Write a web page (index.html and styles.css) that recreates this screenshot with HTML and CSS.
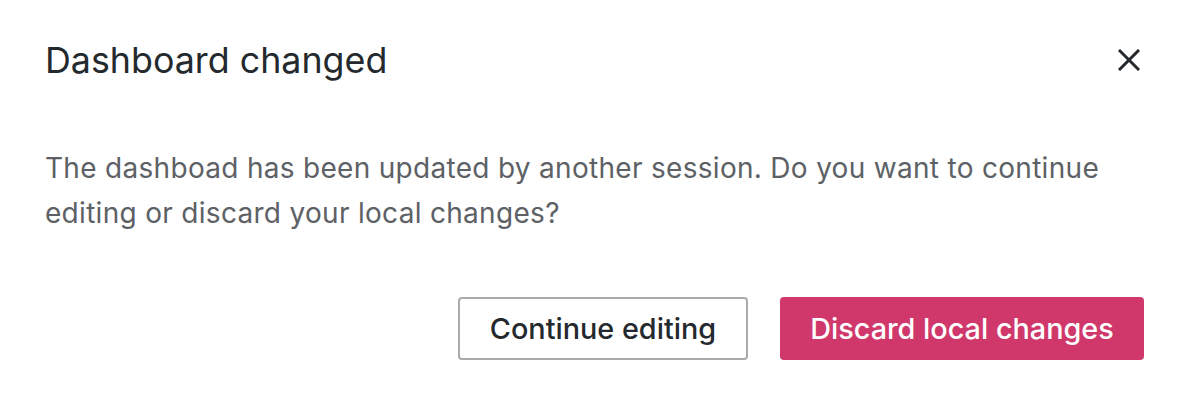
FILE: index.html
```html
<!DOCTYPE html>
<html>
<head>
<meta charset="utf-8">
<link rel="stylesheet" href="styles.css">
</head>
<body>
<div class="modal">
  <div class="header">
    <h2 class="title">Dashboard changed</h2>
    <button class="close" aria-label="Close">
      <svg width="22" height="22" viewBox="0 0 22 22"><path d="M2 2L20 20M20 2L2 20" stroke="#24292e" stroke-width="3" stroke-linecap="square" fill="none"/></svg>
    </button>
  </div>
  <p class="body">The dashboad has been updated by another session. Do you want to continue editing or discard your local changes?</p>
  <div class="actions">
    <button class="btn btn-secondary">Continue editing</button>
    <button class="btn btn-primary">Discard local changes</button>
  </div>
</div>
</body>
</html>
```
FILE: styles.css
```css
html, body {
  margin: 0;
  padding: 0;
  background: #ffffff;
}
body {
  font-family: "Inter", "Liberation Sans", sans-serif;
}
.modal {
  width: 1188px;
  height: 406px;
  box-sizing: border-box;
  padding: 38px 44px 0 45px;
  display: flex;
  flex-direction: column;
}
.header {
  display: flex;
  justify-content: space-between;
  align-items: center;
  height: 44px;
}
.title {
  margin: 0;
  font-size: 35.8px;
  font-weight: 400;
  color: #24292e;
  line-height: 44px;
}
.close {
  border: none;
  background: none;
  padding: 0;
  margin-right: 4px;
  width: 22px;
  height: 22px;
  display: flex;
}
.body {
  margin: 64px 0 0 0;
  font-size: 28px;
  letter-spacing: 0.3px;
  line-height: 45px;
  color: #5d6166;
  max-width: 1080px;
}
.actions {
  display: flex;
  justify-content: flex-end;
  gap: 32px;
  margin-top: 61px;
}
.btn {
  font-family: "Inter", "Liberation Sans", sans-serif;
  font-size: 28.8px;
  font-weight: 500;
  height: 63px;
  border-radius: 4px;
  box-sizing: border-box;
  padding: 0;
  cursor: pointer;
}
.btn-secondary {
  background: #ffffff;
  border: 2px solid #aaaaaa;
  color: #24292e;
  width: 290px;
}
.btn-primary {
  background: #d0386c;
  border: none;
  color: #ffffff;
  width: 364px;
}
```
